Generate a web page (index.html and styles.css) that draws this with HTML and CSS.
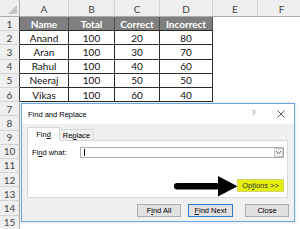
FILE: index.html
```html
<!DOCTYPE html>
<html>
<head>
<meta charset="utf-8">
<link rel="stylesheet" href="styles.css">
</head>
<body>
<div class="grid">
  <div class="corner"></div>
  <div class="ch">A</div><div class="ch">B</div><div class="ch">C</div><div class="ch">D</div><div class="ch">E</div><div class="ch">F</div>

  <div class="rh rt">1</div><div class="th">Name</div><div class="th">Total</div><div class="th">Correct</div><div class="th">Incorrect</div><div class="c"></div><div class="c"></div>
  <div class="rh rt">2</div><div class="t">Anand</div><div class="t">100</div><div class="t">20</div><div class="t">80</div><div class="c"></div><div class="c"></div>
  <div class="rh rt">3</div><div class="t">Aran</div><div class="t">100</div><div class="t">30</div><div class="t">70</div><div class="c"></div><div class="c"></div>
  <div class="rh rt">4</div><div class="t">Rahul</div><div class="t">100</div><div class="t">40</div><div class="t">60</div><div class="c"></div><div class="c"></div>
  <div class="rh rt">5</div><div class="t">Neeraj</div><div class="t">100</div><div class="t">50</div><div class="t">50</div><div class="c"></div><div class="c"></div>
  <div class="rh rt">6</div><div class="t">Vikas</div><div class="t">100</div><div class="t">60</div><div class="t">40</div><div class="c"></div><div class="c"></div>
  <div class="rh">7</div><div class="c"></div><div class="c"></div><div class="c"></div><div class="c"></div><div class="c"></div><div class="c"></div>
  <div class="rh">8</div><div class="c"></div><div class="c"></div><div class="c"></div><div class="c"></div><div class="c"></div><div class="c"></div>
  <div class="rh">9</div><div class="c"></div><div class="c"></div><div class="c"></div><div class="c"></div><div class="c"></div><div class="c"></div>
  <div class="rh">10</div><div class="c"></div><div class="c"></div><div class="c"></div><div class="c"></div><div class="c"></div><div class="c"></div>
  <div class="rh">11</div><div class="c"></div><div class="c"></div><div class="c"></div><div class="c"></div><div class="c"></div><div class="c"></div>
  <div class="rh">12</div><div class="c"></div><div class="c"></div><div class="c"></div><div class="c"></div><div class="c"></div><div class="c"></div>
  <div class="rh">13</div><div class="c"></div><div class="c"></div><div class="c"></div><div class="c"></div><div class="c"></div><div class="c"></div>
  <div class="rh">14</div><div class="c"></div><div class="c"></div><div class="c"></div><div class="c"></div><div class="c"></div><div class="c"></div>
  <div class="rh">15</div><div class="c"></div><div class="c"></div><div class="c"></div><div class="c"></div><div class="c"></div><div class="c"></div>
</div>

<div class="dlg">
  <div class="titlebar">
    <span class="title">Find and Replace</span>
    <span class="tbtn help">?</span>
    <span class="tbtn close">
      <svg width="8" height="8" viewBox="0 0 8 8"><path d="M0.5 0.5 L7.5 7.5 M7.5 0.5 L0.5 7.5" stroke="#333" stroke-width="0.8" fill="none"/></svg>
    </span>
  </div>
  <div class="dbody">
    <div class="tabs">
      <div class="tab active">Fin<u>d</u></div>
      <div class="tab">Re<u>p</u>lace</div>
    </div>
    <div class="panel">
      <div class="findrow">
        <span class="lbl">Fi<u>n</u>d what:</span>
        <div class="input">
          <span class="caret"></span>
          <span class="dd"><svg width="7" height="5" viewBox="0 0 7 5"><path d="M0.8 1 L3.5 3.8 L6.2 1" stroke="#555" stroke-width="0.9" fill="none"/></svg></span>
        </div>
      </div>
      <div class="options">Op<u>t</u>ions &gt;&gt;</div>
    </div>
    <div class="btnrow">
      <div class="btn">F<u>i</u>nd All</div>
      <div class="btn default"><u>F</u>ind Next</div>
      <div class="btn gap">Close</div>
    </div>
  </div>
</div>

<svg class="arrow" width="68" height="24" viewBox="0 0 68 24">
  <rect x="2" y="8" width="46" height="6.5" rx="3.2" fill="#000"/>
  <polygon points="46,1 65.5,11.2 46,21.5" fill="#000"/>
</svg>
</body>
</html>
```
FILE: styles.css
```css
body {
  margin: 0;
  width: 300px;
  height: 229px;
  overflow: hidden;
  position: relative;
  background: #fff;
  font-family: Lato, "Liberation Sans", sans-serif;
}

.grid {
  display: grid;
  grid-template-columns: 20px 49px 46px 45px 53px 45px 48px;
  grid-template-rows: 17px repeat(15, 14.2px);
}

.grid > div {
  box-sizing: border-box;
  display: flex;
  align-items: center;
  justify-content: center;
  overflow: hidden;
  white-space: nowrap;
}

.corner {
  position: relative;
  background: #efefef;
  border-right: 1px solid #ababab;
  border-bottom: 1px solid #ababab;
}

.corner::after {
  content: "";
  position: absolute;
  right: 2px;
  bottom: 2px;
  width: 0;
  height: 0;
  border-left: 9px solid transparent;
  border-bottom: 9px solid #c4c4c4;
}

.ch {
  background: #efefef;
  color: #444;
  font-size: 10px;
  padding-top: 2px;
  border-right: 1px solid #d4d4d4;
  border-bottom: 1px solid #ababab;
}

.rh {
  background: #efefef;
  color: #444;
  font-size: 10px;
  border-right: 1px solid #ababab;
  border-bottom: 1px solid #d4d4d4;
}

.rh.rt {
  border-right-color: #3a3a3a;
}

.th {
  background: #7f7f7f;
  color: #fff;
  font-weight: bold;
  font-size: 10px;
  border-right: 1px solid #4d4d4d;
  border-bottom: 1px solid #2a2a2a;
}

.t {
  color: #111;
  font-size: 10px;
  border-right: 1px solid #2a2a2a;
  border-bottom: 1px solid #2a2a2a;
}

.c {
  background: #fff;
}

/* dialog */
.dlg {
  position: absolute;
  left: 21px;
  top: 103px;
  width: 274px;
  height: 119px;
  box-sizing: border-box;
  border: 1px solid #6ea8e2;
  background: #f0f0f0;
  display: flex;
  flex-direction: column;
  font-family: "Liberation Sans", Arial, sans-serif;
  font-size: 7.5px;
  color: #000;
  box-shadow: 0 0 3px rgba(0, 0, 0, 0.18);
}

.titlebar {
  height: 20px;
  flex: none;
  background: #fff;
  display: flex;
  align-items: center;
  padding-left: 6px;
}

.title {
  flex: 1;
  font-size: 7.5px;
}

.tbtn {
  width: 27px;
  height: 20px;
  display: flex;
  align-items: center;
  justify-content: center;
  color: #333;
}

.help {
  font-size: 8px;
  font-family: "DejaVu Sans", sans-serif;
  font-weight: 300;
}

.dbody {
  flex: 1;
  display: flex;
  flex-direction: column;
  padding: 3px 6px 4px 5px;
}

.tabs {
  display: flex;
  align-items: flex-end;
  height: 13px;
  flex: none;
}

.tab {
  box-sizing: border-box;
  width: 34px;
  height: 11px;
  border: 1px solid #d9d9d9;
  border-bottom: none;
  border-left: none;
  background: #f0f0f0;
  display: flex;
  align-items: center;
  justify-content: center;
}

.tab.active {
  width: 33px;
  height: 14px;
  margin-bottom: -1px;
  background: #fff;
  border-left: 1px solid #d9d9d9;
  position: relative;
  z-index: 1;
}

.panel {
  box-sizing: border-box;
  height: 58px;
  flex: none;
  background: #fff;
  border: 1px solid #d9d9d9;
  padding: 6px 3px 5px 4px;
  display: flex;
  flex-direction: column;
}

.findrow {
  display: flex;
  align-items: center;
  height: 11px;
}

.lbl {
  width: 48px;
  flex: none;
}

.input {
  flex: 1;
  height: 11px;
  box-sizing: border-box;
  border: 1px solid #abadb3;
  background: #fff;
  display: flex;
  align-items: center;
  justify-content: space-between;
  padding-left: 3px;
}

.caret {
  width: 1px;
  height: 7px;
  background: #000;
}

.dd {
  box-sizing: border-box;
  width: 9px;
  height: 9px;
  border: 1px solid #c8c8c8;
  background: #f2f2f2;
  display: flex;
  align-items: center;
  justify-content: center;
}

.options {
  margin-top: auto;
  align-self: flex-end;
  box-sizing: border-box;
  width: 47px;
  height: 13px;
  background: #e6ee0c;
  border: 1px solid #d0d46a;
  color: #333;
  display: flex;
  align-items: center;
  justify-content: center;
}

.btnrow {
  margin-top: 6px;
  height: 13px;
  display: flex;
  justify-content: flex-end;
  gap: 7px;
}

.btn {
  box-sizing: border-box;
  width: 44px;
  height: 13px;
  background: #e1e1e1;
  border: 1px solid #adadad;
  display: flex;
  align-items: center;
  justify-content: center;
}

.btn.default {
  width: 45px;
  border-color: #2a7ad4;
}

.btn.gap {
  margin-left: 5px;
  margin-right: -1px;
}

.arrow {
  position: absolute;
  left: 172px;
  top: 175px;
}
```
